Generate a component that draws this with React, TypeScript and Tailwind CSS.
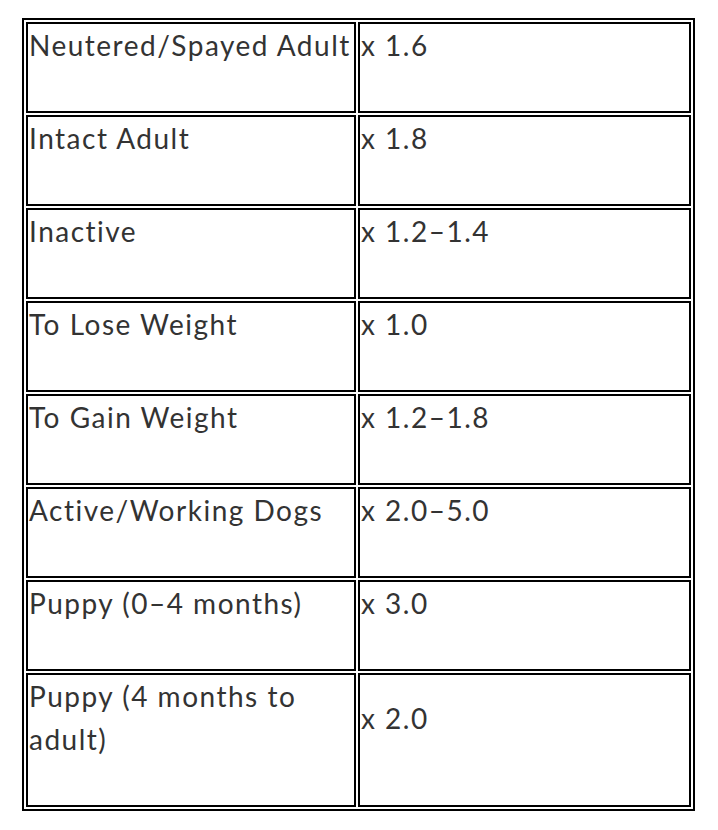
import React from "react";

const rows: [string, string][] = [
  ["Neutered/Spayed Adult", "x 1.6"],
  ["Intact Adult", "x 1.8"],
  ["Inactive", "x 1.2–1.4"],
  ["To Lose Weight", "x 1.0"],
  ["To Gain Weight", "x 1.2–1.8"],
  ["Active/Working Dogs", "x 2.0–5.0"],
  ["Puppy (0–4 months)", "x 3.0"],
  ["Puppy (4 months to adult)", "x 2.0"],
];

export default function App() {
  return (
    <div className="bg-white min-h-[830px] pt-[18px] pl-[22px]" style={{ fontFamily: "Lato, 'Noto Sans', sans-serif" }}>
      <table className="table-fixed border-separate border-2 border-black border-spacing-[2px] text-[28px] leading-[43px] tracking-[1.5px] text-[#333333]">
        <colgroup>
          <col className="w-[330px]" />
          <col className="w-[333px]" />
        </colgroup>
        <tbody>
          {rows.map(([a, b]) => (
            <tr key={a}>
              <td className="border-2 border-black align-middle px-px pt-0 pb-[44px]">{a}</td>
              <td className="border-2 border-black align-middle px-px pt-0 pb-[44px]">{b}</td>
            </tr>
          ))}
        </tbody>
      </table>
    </div>
  );
}
